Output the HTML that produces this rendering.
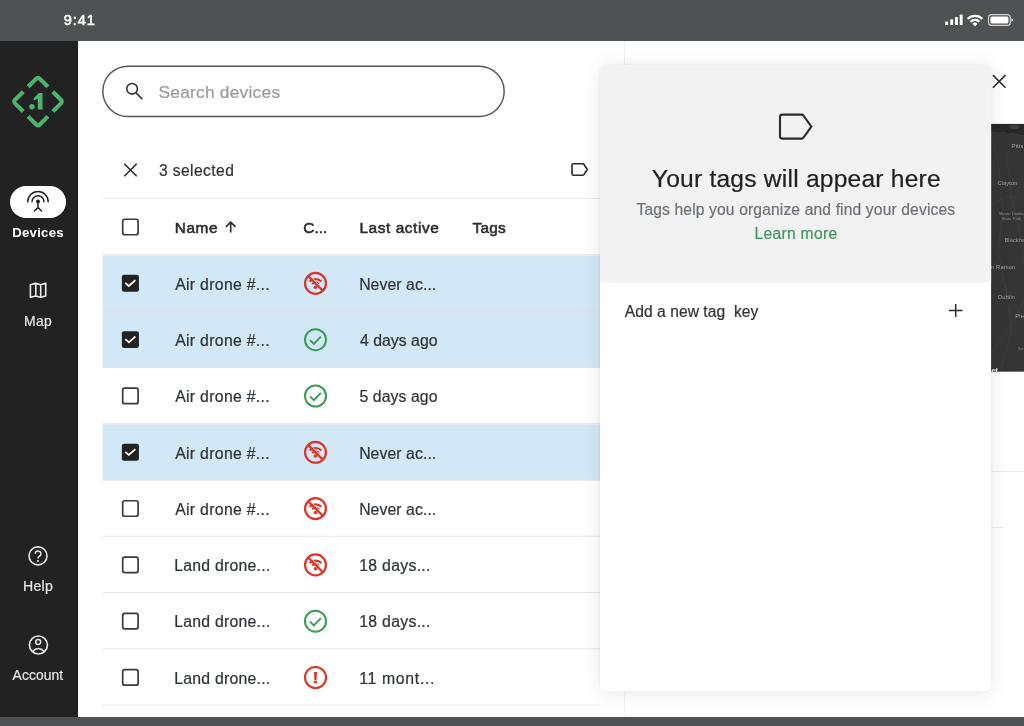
<!DOCTYPE html>
<html><head><meta charset="utf-8"><title>Devices</title>
<style>
html,body{margin:0;padding:0;background:#fff;}
body{width:1024px;height:726px;position:relative;overflow:hidden;font-family:"Liberation Sans",sans-serif;}
.a{position:absolute;}
.t{position:absolute;white-space:pre;font-family:"Liberation Sans",sans-serif;}
.ic{position:absolute;overflow:visible;}
.ln{position:absolute;background:#e6e6e6;height:1px;}
#root{position:absolute;left:0;top:0;width:1024px;height:726px;overflow:hidden;will-change:transform;}
</style></head><body><div id="root">

<div class="a" style="left:624px;top:41px;width:1px;height:676px;background:#f0f0f0"></div>
<div class="ln" style="left:980px;top:471px;width:44px;background:#ececec"></div>
<div class="ln" style="left:980px;top:527px;width:22.5px;background:#eeeeee"></div>
<svg class="a" id="map" style="left:980px;top:120px" width="44" height="256" viewBox="980 120 44 256">
<rect x="980" y="123.9" width="44" height="247.8" fill="#353535"/>
<path d="M980 123.9 H1024 V135.2 L1019 134.6 L1014 132.6 L1009 133.4 L1004 131.8 L999 132.3 L992 131.2 H980 Z" fill="#282828"/>
<path d="M1009 125.5 L1016 124.6 L1021 126.5 L1017 129.3 L1010 128.8 Z" fill="#3c3c3c"/>
<g stroke="#444444" stroke-width="0.6" fill="none" opacity="0.8">
<path d="M994 140 L1000 178 L1003 215 L998 250 L1006 290 L1012 330 L1001 368"/>
<path d="M992 205 L1008 196 L1024 200"/>
<path d="M996 262 L1010 300 L1024 318"/>
<path d="M992 352 L1004 336 L1016 318 L1024 300"/>
<path d="M1006 150 L1010 190 L1019 230 L1024 262"/>
</g>
</svg>
<div class="t" style="left:1011.8px;top:143.67px;font-size:5.7px;line-height:5.7px;color:#a9a9a9;font-weight:400;letter-spacing:0.12px;width:12.200000000000045px;overflow:hidden">Pitts</div>
<div class="t" style="left:997.4px;top:181.17px;font-size:5.7px;line-height:5.7px;color:#a6a6a6;font-weight:400;letter-spacing:0.12px;width:26.600000000000023px;overflow:hidden">Clayton</div>
<div class="t" style="left:998.9px;top:211.61px;font-size:4.0px;line-height:4.0px;color:#8f8f8f;font-weight:400;letter-spacing:0.12px;width:25.100000000000023px;overflow:hidden">Mount Diablo</div>
<div class="t" style="left:1001.5px;top:217.21px;font-size:4.0px;line-height:4.0px;color:#8f8f8f;font-weight:400;letter-spacing:0.12px;width:22.5px;overflow:hidden">State Park</div>
<div class="t" style="left:1004.5px;top:238.26px;font-size:5.6px;line-height:5.6px;color:#9c9c9c;font-weight:400;letter-spacing:0.12px;width:19.5px;overflow:hidden">Blackha</div>
<div class="t" style="left:991.0px;top:264.59px;font-size:5.8px;line-height:5.8px;color:#a6a6a6;font-weight:400;letter-spacing:0.12px;width:33.0px;overflow:hidden">n Ramon</div>
<div class="t" style="left:998px;top:295.39px;font-size:5.8px;line-height:5.8px;color:#a2a2a2;font-weight:400;letter-spacing:0.12px;width:26px;overflow:hidden">Dublin</div>
<div class="t" style="left:1015.3px;top:314.09px;font-size:5.8px;line-height:5.8px;color:#a6a6a6;font-weight:400;letter-spacing:0.12px;width:8.700000000000045px;overflow:hidden">Ple</div>
<div class="t" style="left:1018px;top:347.01px;font-size:4.0px;line-height:4.0px;color:#8a8a8a;font-weight:400;letter-spacing:0.12px;width:6px;overflow:hidden">Su</div>
<div class="t" style="left:991.4px;top:366.94px;font-size:7.4px;line-height:7.4px;color:#e6e6e6;font-weight:700;letter-spacing:0.12px;width:32.60000000000002px;overflow:hidden">et</div>
<svg class="ic" style="left:989px;top:71px;transform:translate(0.20px,0.40px)" width="20" height="20" viewBox="-10 -10 20 20" fill="none" stroke="#2b2b2b" stroke-width="1.5"><path d="M-6.3 -6.3 L6.3 6.3 M6.3 -6.3 L-6.3 6.3"/></svg>
<svg class="a" style="left:0;top:0" width="1024" height="726" viewBox="0 0 1024 726"><rect x="102.6" y="255.35" width="498" height="56.30" fill="#d3e8f6"/><rect x="102.6" y="311.65" width="498" height="56.30" fill="#d3e8f6"/><rect x="102.6" y="424.25" width="498" height="56.30" fill="#d3e8f6"/><rect x="103" y="197.97" width="497.6" height="1" fill="#e9e9e9"/><rect x="102.6" y="254.25" width="498" height="1" fill="#e6e6e6"/><rect x="102.6" y="310.55" width="498" height="1" fill="#d9dee1"/><rect x="102.6" y="366.85" width="498" height="1" fill="#e6e6e6"/><rect x="102.6" y="423.15" width="498" height="1" fill="#e6e6e6"/><rect x="102.6" y="479.45" width="498" height="1" fill="#e6e6e6"/><rect x="102.6" y="535.75" width="498" height="1" fill="#e6e6e6"/><rect x="102.6" y="592.05" width="498" height="1" fill="#e6e6e6"/><rect x="102.6" y="648.35" width="498" height="1" fill="#e6e6e6"/><rect x="102.6" y="704.65" width="498" height="1" fill="#e6e6e6"/></svg>
<svg class="ic" style="left:120px;top:217px;transform:translate(0.40px,0.00px)" width="20" height="20" viewBox="-10 -10 20 20"><rect x="-7.7" y="-7.75" width="15.4" height="15.5" rx="2" fill="none" stroke="#3a3a3a" stroke-width="1.7"/></svg>
<svg class="ic" style="left:120px;top:273px;transform:translate(0.40px,0.30px)" width="20" height="20" viewBox="-10 -10 20 20"><rect x="-8.55" y="-8.45" width="17.1" height="16.9" rx="2.2" fill="#222"/><path d="M-5.1 -0.4 L-1.6 2.7 L5.0 -3.1" fill="none" stroke="#fff" stroke-width="1.75"/></svg>
<svg class="ic" style="left:302px;top:270px;transform:translate(0.50px,0.40px)" width="26" height="26" viewBox="-13 -13 26 26" fill="none" stroke="#d7372a" stroke-width="2.1">
<path d="M-5.9 -1.8 A8.3 8.3 0 0 1 5.9 -1.8" stroke-width="2.15"/>
<path d="M-3.4 0.6 A4.8 4.8 0 0 1 3.4 0.6" stroke-width="2.1"/>
<circle cx="-0.1" cy="3.8" r="1.75" fill="#d7372a" stroke="none"/>
<path d="M-6.0 -8.0 L8.0 6.0" stroke="#d3e8f6" stroke-width="0.9"/>
<path d="M-7.4 -7.4 L7.4 7.4" stroke-width="2.3"/>
<circle r="10.45" stroke-width="2.2"/>
</svg>
<svg class="ic" style="left:120px;top:329px;transform:translate(0.40px,0.60px)" width="20" height="20" viewBox="-10 -10 20 20"><rect x="-8.55" y="-8.45" width="17.1" height="16.9" rx="2.2" fill="#222"/><path d="M-5.1 -0.4 L-1.6 2.7 L5.0 -3.1" fill="none" stroke="#fff" stroke-width="1.75"/></svg>
<svg class="ic" style="left:302px;top:326px;transform:translate(0.50px,0.70px)" width="26" height="26" viewBox="-13 -13 26 26" fill="none" stroke="#3f9c58" stroke-width="2.1">
<circle r="10.5"/>
<path d="M-5.5 0.4 L-1.6 4.2 L5.4 -3.1" stroke-width="2"/>
</svg>
<svg class="ic" style="left:120px;top:385px;transform:translate(0.40px,0.90px)" width="20" height="20" viewBox="-10 -10 20 20"><rect x="-7.7" y="-7.75" width="15.4" height="15.5" rx="2" fill="none" stroke="#3a3a3a" stroke-width="1.7"/></svg>
<svg class="ic" style="left:302px;top:383px;transform:translate(0.50px,0.00px)" width="26" height="26" viewBox="-13 -13 26 26" fill="none" stroke="#3f9c58" stroke-width="2.1">
<circle r="10.5"/>
<path d="M-5.5 0.4 L-1.6 4.2 L5.4 -3.1" stroke-width="2"/>
</svg>
<svg class="ic" style="left:120px;top:442px;transform:translate(0.40px,0.20px)" width="20" height="20" viewBox="-10 -10 20 20"><rect x="-8.55" y="-8.45" width="17.1" height="16.9" rx="2.2" fill="#222"/><path d="M-5.1 -0.4 L-1.6 2.7 L5.0 -3.1" fill="none" stroke="#fff" stroke-width="1.75"/></svg>
<svg class="ic" style="left:302px;top:439px;transform:translate(0.50px,0.30px)" width="26" height="26" viewBox="-13 -13 26 26" fill="none" stroke="#d7372a" stroke-width="2.1">
<path d="M-5.9 -1.8 A8.3 8.3 0 0 1 5.9 -1.8" stroke-width="2.15"/>
<path d="M-3.4 0.6 A4.8 4.8 0 0 1 3.4 0.6" stroke-width="2.1"/>
<circle cx="-0.1" cy="3.8" r="1.75" fill="#d7372a" stroke="none"/>
<path d="M-6.0 -8.0 L8.0 6.0" stroke="#d3e8f6" stroke-width="0.9"/>
<path d="M-7.4 -7.4 L7.4 7.4" stroke-width="2.3"/>
<circle r="10.45" stroke-width="2.2"/>
</svg>
<svg class="ic" style="left:120px;top:498px;transform:translate(0.40px,0.50px)" width="20" height="20" viewBox="-10 -10 20 20"><rect x="-7.7" y="-7.75" width="15.4" height="15.5" rx="2" fill="none" stroke="#3a3a3a" stroke-width="1.7"/></svg>
<svg class="ic" style="left:302px;top:495px;transform:translate(0.50px,0.60px)" width="26" height="26" viewBox="-13 -13 26 26" fill="none" stroke="#d7372a" stroke-width="2.1">
<path d="M-5.9 -1.8 A8.3 8.3 0 0 1 5.9 -1.8" stroke-width="2.15"/>
<path d="M-3.4 0.6 A4.8 4.8 0 0 1 3.4 0.6" stroke-width="2.1"/>
<circle cx="-0.1" cy="3.8" r="1.75" fill="#d7372a" stroke="none"/>
<path d="M-6.0 -8.0 L8.0 6.0" stroke="#ffffff" stroke-width="0.9"/>
<path d="M-7.4 -7.4 L7.4 7.4" stroke-width="2.3"/>
<circle r="10.45" stroke-width="2.2"/>
</svg>
<svg class="ic" style="left:120px;top:554px;transform:translate(0.40px,0.80px)" width="20" height="20" viewBox="-10 -10 20 20"><rect x="-7.7" y="-7.75" width="15.4" height="15.5" rx="2" fill="none" stroke="#3a3a3a" stroke-width="1.7"/></svg>
<svg class="ic" style="left:302px;top:551px;transform:translate(0.50px,0.90px)" width="26" height="26" viewBox="-13 -13 26 26" fill="none" stroke="#d7372a" stroke-width="2.1">
<path d="M-5.9 -1.8 A8.3 8.3 0 0 1 5.9 -1.8" stroke-width="2.15"/>
<path d="M-3.4 0.6 A4.8 4.8 0 0 1 3.4 0.6" stroke-width="2.1"/>
<circle cx="-0.1" cy="3.8" r="1.75" fill="#d7372a" stroke="none"/>
<path d="M-6.0 -8.0 L8.0 6.0" stroke="#ffffff" stroke-width="0.9"/>
<path d="M-7.4 -7.4 L7.4 7.4" stroke-width="2.3"/>
<circle r="10.45" stroke-width="2.2"/>
</svg>
<svg class="ic" style="left:120px;top:611px;transform:translate(0.40px,0.10px)" width="20" height="20" viewBox="-10 -10 20 20"><rect x="-7.7" y="-7.75" width="15.4" height="15.5" rx="2" fill="none" stroke="#3a3a3a" stroke-width="1.7"/></svg>
<svg class="ic" style="left:302px;top:608px;transform:translate(0.50px,0.20px)" width="26" height="26" viewBox="-13 -13 26 26" fill="none" stroke="#3f9c58" stroke-width="2.1">
<circle r="10.5"/>
<path d="M-5.5 0.4 L-1.6 4.2 L5.4 -3.1" stroke-width="2"/>
</svg>
<svg class="ic" style="left:120px;top:667px;transform:translate(0.40px,0.40px)" width="20" height="20" viewBox="-10 -10 20 20"><rect x="-7.7" y="-7.75" width="15.4" height="15.5" rx="2" fill="none" stroke="#3a3a3a" stroke-width="1.7"/></svg>
<svg class="ic" style="left:302px;top:664px;transform:translate(0.50px,0.50px)" width="26" height="26" viewBox="-13 -13 26 26" fill="none" stroke="#d7372a" stroke-width="2.1">
<circle r="10.5"/>
<path d="M-1.6 -5.6 L1.6 -5.6 L1 2.9 L-1 2.9 Z" fill="#d7372a" stroke="none"/>
<rect x="-1.65" y="3.6" width="3.3" height="2.1" fill="#d7372a" stroke="none"/>
</svg>
<svg class="ic" style="left:223px;top:219px;transform:translate(0.00px,0.00px)" width="16" height="16" viewBox="0 0 16 16" fill="none" stroke="#2b2b2b" stroke-width="1.6"><path d="M7.7 13.4 L7.7 3.2 M2.9 7.9 L7.7 3.1 L12.5 7.9"/></svg>
<svg class="ic" style="left:120px;top:160px;transform:translate(0.50px,0.00px)" width="20" height="20" viewBox="-10 -10 20 20" fill="none" stroke="#2b2b2b" stroke-width="1.6"><path d="M-6.2 -6.2 L6.2 6.2 M6.2 -6.2 L-6.2 6.2"/></svg>
<svg class="ic" style="left:568px;top:158px;transform:translate(0.00px,0.00px)" width="24" height="24" viewBox="0 0 24 24" fill="none" stroke="#2b2b2b" stroke-width="1.65" stroke-linejoin="round"><path d="M5.6 5.7 H14.6 Q15.3 5.7 15.8 6.3 L19.3 11.5 L15.8 16.7 Q15.3 17.25 14.6 17.25 H5.6 Q4 17.25 4 15.65 V7.3 Q4 5.7 5.6 5.7 Z"/></svg>
<svg class="a" style="left:95px;top:60px" width="420" height="64" viewBox="95 60 420 64" fill="none"><rect x="102.8" y="66.15" width="401.4" height="50.4" rx="25.2" stroke="#555555" stroke-width="1.45"/><circle cx="132.1" cy="88.75" r="5.35" stroke="#2b2b2b" stroke-width="1.55"/><path d="M135.9 92.6 L142.3 99.2" stroke="#2b2b2b" stroke-width="1.6"/></svg>
<div class="a" id="card" style="left:600px;top:65px;width:391px;height:626px;border-radius:6.5px;background:#fff;box-shadow:0 2px 22px rgba(0,0,0,0.09),0 0 3px rgba(0,0,0,0.09)"></div>
<svg class="a" style="left:596px;top:60px" width="400" height="636" viewBox="596 60 400 636"><defs><clipPath id="cc"><rect x="600.1" y="65.2" width="391.0" height="626.0" rx="6"/></clipPath></defs><g clip-path="url(#cc)"><rect x="596" y="60" width="400" height="640" fill="#ffffff"/><rect x="596" y="60" width="400" height="222.4" fill="#f2f2f2"/></g></svg>
<svg class="ic" style="left:775px;top:108px;transform:translate(0.00px,0.00px)" width="42" height="36" viewBox="0 0 42 36" fill="none" stroke="#2b2b2b" stroke-width="2.1" stroke-linejoin="round"><path d="M7.4 6.6 H26.6 Q27.7 6.6 28.4 7.5 L36.4 18.6 L28.4 29.7 Q27.7 30.6 26.6 30.6 H7.4 Q5 30.6 5 28.2 V9 Q5 6.6 7.4 6.6 Z"/></svg>
<svg class="ic" style="left:945px;top:300px;transform:translate(0.70px,0.50px)" width="20" height="20" viewBox="-10 -10 20 20" fill="none" stroke="#2b2b2b" stroke-width="1.5"><path d="M-6.8 0 H6.8 M0 -6.6 V6.6"/></svg>
<div class="a" style="left:0;top:0;width:78px;height:726px;background:#222222"></div>
<svg class="ic" style="left:8px;top:71px;transform:translate(0.00px,0.60px)" width="60" height="60" viewBox="-30 -30 60 60" fill="none" stroke="#4db36c" stroke-width="4.1" stroke-linejoin="round">
<path d="M-9.9 -14.8 L-1.8 -22.9 Q0 -24.7 1.8 -22.9 L9.9 -14.8"/>
<path d="M-9.9 14.8 L-1.8 22.9 Q0 24.7 1.8 22.9 L9.9 14.8"/>
<path d="M-14.8 -9.9 L-22.9 -1.8 Q-24.7 0 -22.9 1.8 L-14.8 9.9"/>
<path d="M14.8 -9.9 L22.9 -1.8 Q24.7 0 22.9 1.8 L14.8 9.9"/>
<circle cx="-6.1" cy="5.2" r="2.7" fill="#4db36c" stroke="none"/>
<path d="M-4.2 -3.6 L0.8 -8.6 L4.5 -8.6 L4.5 7.9 L-0.2 7.9 L-0.2 -2.8 L-4.2 -1 Z" fill="#4db36c" stroke="none"/>
</svg>
<div class="a" style="left:9.7px;top:185.8px;width:56.4px;height:32.2px;border-radius:17px;background:#fff"></div>
<svg class="ic" style="left:24px;top:187px;transform:translate(0.00px,0.40px)" width="28" height="28" viewBox="-14 -14 28 28" fill="none" stroke="#222" stroke-width="1.5" stroke-linecap="round"><path d="M-10.2 0.3 A10.2 10.2 0 0 1 10.2 0.3"/><path d="M-6 0.3 A6 6 0 0 1 6 0.3"/><circle r="2" fill="#222" stroke="none"/><path d="M0 0 V6.2 M0 6.2 L-3.6 9.6 M0 6.2 L3.6 9.6"/></svg>
<svg class="ic" style="left:26px;top:278px;transform:translate(0.00px,0.00px)" width="24" height="24" viewBox="0 0 24 24" fill="none" stroke="#ececec" stroke-width="1.6" stroke-linejoin="round"><path d="M4.4 6.8 L9.8 5.2 L14.7 6.8 L19.7 5.2 V17.9 L14.7 19.3 L9.8 17.9 L4.4 19.3 Z M9.8 5.2 V17.9 M14.7 6.8 V19.3"/></svg>
<svg class="ic" style="left:26px;top:543px;transform:translate(0.00px,0.90px)" width="24" height="24" viewBox="-12 -12 24 24" fill="none" stroke="#e8e8e8" stroke-width="1.6"><circle r="9"/><path d="M-2.7 -2.2 A2.8 2.8 0 1 1 1.2 0.4 Q0 1.1 0 2.6" stroke-width="1.5"/><circle cx="0" cy="5" r="1" fill="#e8e8e8" stroke="none"/></svg>
<svg class="ic" style="left:26px;top:633px;transform:translate(0.40px,0.00px)" width="24" height="24" viewBox="-12 -12 24 24" fill="none" stroke="#e8e8e8" stroke-width="1.6"><circle r="9"/><circle cx="-0.2" cy="-3" r="2.5" stroke-width="1.5"/><path d="M-5.9 6.4 Q-0.2 0.6 5.9 6.4" stroke-width="1.5"/></svg>
<div class="a" style="left:0;top:0;width:1024px;height:40.6px;background:#505153"></div>
<div class="a" style="left:0;top:716.8px;width:1024px;height:10px;background:#505153"></div>
<svg class="ic" style="left:940px;top:10px;transform:translate(0.00px,0.00px)" width="80" height="20" viewBox="940 10 80 20" fill="#fff">
<rect x="945.2" y="21.4" width="2.9" height="3.7" rx="0.6"/><rect x="950.3" y="19.3" width="2.9" height="5.8" rx="0.6"/><rect x="955" y="17" width="2.9" height="8.1" rx="0.6"/><rect x="959.7" y="14.6" width="2.9" height="10.5" rx="0.6"/>
<g fill="none" stroke="#fff" stroke-width="2.2"><path d="M967.65 18.85 A10.4 10.4 0 0 1 982.35 18.85"/><path d="M970.55 21.75 A6.3 6.3 0 0 1 979.45 21.75"/></g><path d="M975 26.4 L972.55 23.85 A3.4 3.4 0 0 1 977.45 23.85 Z"/>
<rect x="988.5" y="14.6" width="21.8" height="10.8" rx="3" fill="none" stroke="#fff" stroke-opacity="0.75" stroke-width="1.1"/><rect x="990.4" y="16.5" width="18" height="7" rx="1.5"/><path d="M1011.4 18.3 Q1013.1 18.8 1013.1 20 Q1013.1 21.2 1011.4 21.7 Z" fill-opacity="0.8"/>
</svg>
<div class="t" style="left:63.81px;top:13.00px;font-size:14.6px;line-height:14.6px;font-weight:400;color:#ffffff;letter-spacing:0.855px;-webkit-text-stroke:0.6px #ffffff;">9:41</div>
<div class="t" style="left:12.27px;top:226.00px;font-size:13.2px;line-height:13.2px;font-weight:700;color:#ffffff;letter-spacing:0.242px;">Devices</div>
<div class="t" style="left:23.99px;top:315.00px;font-size:13.9px;line-height:13.9px;font-weight:400;color:#e4e4e4;letter-spacing:0.388px;-webkit-text-stroke:0.22px;">Map</div>
<div class="t" style="left:22.90px;top:579.00px;font-size:14.1px;line-height:14.1px;font-weight:400;color:#e4e4e4;letter-spacing:0.353px;-webkit-text-stroke:0.22px;">Help</div>
<div class="t" style="left:12.62px;top:669.00px;font-size:13.8px;line-height:13.8px;font-weight:400;color:#e4e4e4;letter-spacing:0.116px;-webkit-text-stroke:0.22px;">Account</div>
<div class="t" style="left:158.44px;top:84.00px;font-size:17.4px;line-height:17.4px;font-weight:400;color:#9b9b9b;letter-spacing:0.212px;-webkit-text-stroke:0.22px;">Search devices</div>
<div class="t" style="left:158.94px;top:163.00px;font-size:15.6px;line-height:15.6px;font-weight:400;color:#333333;letter-spacing:0.425px;-webkit-text-stroke:0.22px;">3 selected</div>
<div class="t" style="left:174.64px;top:220.00px;font-size:15.4px;line-height:15.4px;font-weight:400;color:#2b2b2b;letter-spacing:0.639px;-webkit-text-stroke:0.55px #2b2b2b;">Name</div>
<div class="t" style="left:303.24px;top:220.00px;font-size:15.4px;line-height:15.4px;font-weight:400;color:#2b2b2b;letter-spacing:0.035px;-webkit-text-stroke:0.55px #2b2b2b;">C...</div>
<div class="t" style="left:359.42px;top:220.00px;font-size:15.4px;line-height:15.4px;font-weight:400;color:#2b2b2b;letter-spacing:0.583px;-webkit-text-stroke:0.55px #2b2b2b;">Last active</div>
<div class="t" style="left:472.61px;top:220.00px;font-size:15.4px;line-height:15.4px;font-weight:400;color:#2b2b2b;letter-spacing:0.211px;-webkit-text-stroke:0.55px #2b2b2b;">Tags</div>
<div class="t" style="left:651.84px;top:167.00px;font-size:24.6px;line-height:24.6px;font-weight:400;color:#222222;letter-spacing:0.215px;-webkit-text-stroke:0.22px;">Your tags will appear here</div>
<div class="t" style="left:636.50px;top:202.00px;font-size:15.6px;line-height:15.6px;font-weight:400;color:#6f7378;letter-spacing:0.151px;-webkit-text-stroke:0.22px;">Tags help you organize and find your devices</div>
<div class="t" style="left:754.44px;top:226.00px;font-size:15.6px;line-height:15.6px;font-weight:400;color:#45945f;letter-spacing:0.321px;-webkit-text-stroke:0.22px;">Learn more</div>
<div class="t" style="left:624.76px;top:304.00px;font-size:15.6px;line-height:15.6px;font-weight:400;color:#333333;letter-spacing:0.056px;-webkit-text-stroke:0.22px;">Add a new tag  key</div>
<div class="t" style="left:175.19px;top:277.00px;font-size:15.8px;line-height:15.8px;font-weight:400;color:#2f3438;letter-spacing:0.309px;-webkit-text-stroke:0.22px;">Air drone #...</div>
<div class="t" style="left:359.15px;top:277.00px;font-size:15.8px;line-height:15.8px;font-weight:400;color:#2f3438;letter-spacing:0.071px;-webkit-text-stroke:0.22px;">Never ac...</div>
<div class="t" style="left:175.19px;top:333.00px;font-size:15.8px;line-height:15.8px;font-weight:400;color:#2f3438;letter-spacing:0.309px;-webkit-text-stroke:0.22px;">Air drone #...</div>
<div class="t" style="left:360.00px;top:333.00px;font-size:15.8px;line-height:15.8px;font-weight:400;color:#2f3438;letter-spacing:0.025px;-webkit-text-stroke:0.22px;">4 days ago</div>
<div class="t" style="left:175.19px;top:389.00px;font-size:15.8px;line-height:15.8px;font-weight:400;color:#2f3438;letter-spacing:0.310px;-webkit-text-stroke:0.22px;">Air drone #...</div>
<div class="t" style="left:359.42px;top:389.00px;font-size:15.8px;line-height:15.8px;font-weight:400;color:#2f3438;letter-spacing:0.091px;-webkit-text-stroke:0.22px;">5 days ago</div>
<div class="t" style="left:175.19px;top:446.00px;font-size:15.8px;line-height:15.8px;font-weight:400;color:#2f3438;letter-spacing:0.309px;-webkit-text-stroke:0.22px;">Air drone #...</div>
<div class="t" style="left:359.15px;top:446.00px;font-size:15.8px;line-height:15.8px;font-weight:400;color:#2f3438;letter-spacing:0.071px;-webkit-text-stroke:0.22px;">Never ac...</div>
<div class="t" style="left:175.19px;top:502.00px;font-size:15.8px;line-height:15.8px;font-weight:400;color:#2f3438;letter-spacing:0.310px;-webkit-text-stroke:0.22px;">Air drone #...</div>
<div class="t" style="left:359.15px;top:502.00px;font-size:15.8px;line-height:15.8px;font-weight:400;color:#2f3438;letter-spacing:0.073px;-webkit-text-stroke:0.22px;">Never ac...</div>
<div class="t" style="left:174.15px;top:558.00px;font-size:15.8px;line-height:15.8px;font-weight:400;color:#2f3438;letter-spacing:0.251px;-webkit-text-stroke:0.22px;">Land drone...</div>
<div class="t" style="left:359.18px;top:558.00px;font-size:15.8px;line-height:15.8px;font-weight:400;color:#2f3438;letter-spacing:0.308px;-webkit-text-stroke:0.22px;">18 days...</div>
<div class="t" style="left:174.15px;top:614.00px;font-size:15.8px;line-height:15.8px;font-weight:400;color:#2f3438;letter-spacing:0.251px;-webkit-text-stroke:0.22px;">Land drone...</div>
<div class="t" style="left:359.18px;top:614.00px;font-size:15.8px;line-height:15.8px;font-weight:400;color:#2f3438;letter-spacing:0.308px;-webkit-text-stroke:0.22px;">18 days...</div>
<div class="t" style="left:174.15px;top:671.00px;font-size:15.8px;line-height:15.8px;font-weight:400;color:#2f3438;letter-spacing:0.251px;-webkit-text-stroke:0.22px;">Land drone...</div>
<div class="t" style="left:359.18px;top:671.00px;font-size:15.8px;line-height:15.8px;font-weight:400;color:#2f3438;letter-spacing:0.689px;-webkit-text-stroke:0.22px;">11 mont...</div>
</div></body></html>
